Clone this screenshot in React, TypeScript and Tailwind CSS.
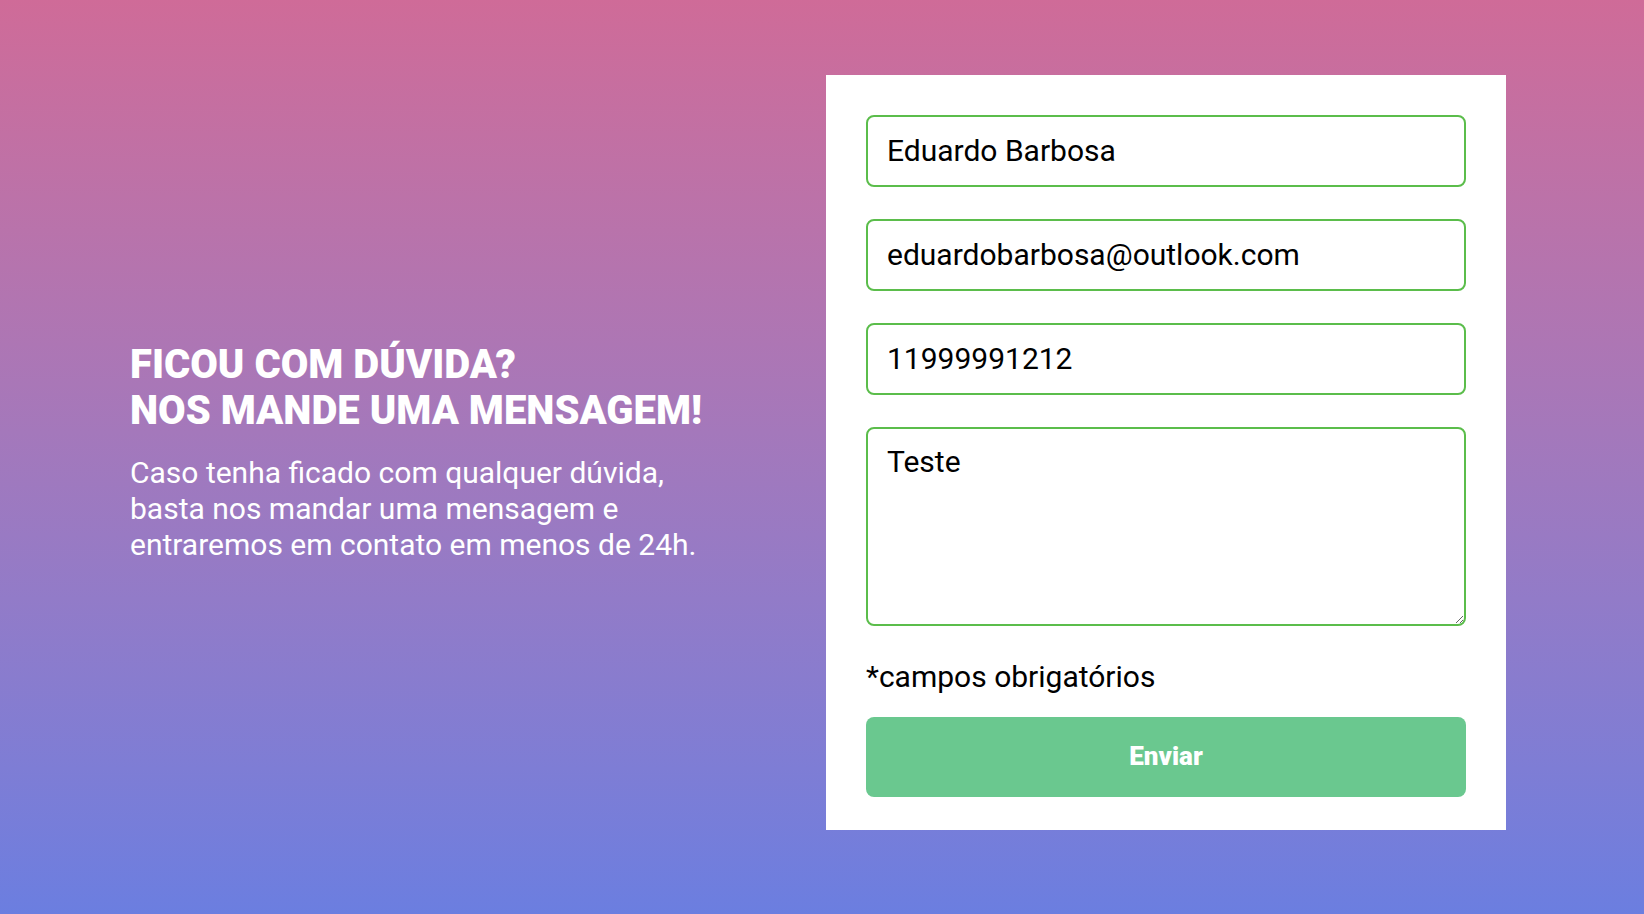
import React from 'react';

const fieldClass =
    'w-full h-[72px] rounded-[8px] border-2 border-[#5bbd4b] bg-white px-[19px] text-[30px] text-black outline-none';

export default function App() {
    return (
        <div className="h-[914px] w-full bg-gradient-to-b from-[#cf6b98] to-[#6b7ee0] font-['Roboto',sans-serif]">
            <div className="flex h-full items-center justify-between pl-[130px] pr-[138px] pb-[10px]">
                {/* texto da esquerda */}
                <div className="w-[592px] text-white">
                    <h2 className="text-[40px] font-black leading-[46px] uppercase">
                        Ficou com dúvida?
                        <br />
                        Nos mande uma mensagem!
                    </h2>
                    <p className="mt-[21px] text-[30px] leading-[36px]">
                        Caso tenha ficado com qualquer dúvida, basta nos mandar uma mensagem e entraremos em contato em menos de 24h.
                    </p>
                </div>

                {/* formulário */}
                <form className="w-[680px] bg-white px-[40px] pt-[40px] pb-[33px]" onSubmit={e => e.preventDefault()}>
                    <input type="text" defaultValue="Eduardo Barbosa" className={fieldClass} />
                    <input type="email" defaultValue="eduardobarbosa@outlook.com" className={`${fieldClass} mt-[32px]`} />
                    <input type="tel" defaultValue="11999991212" className={`${fieldClass} mt-[32px]`} />
                    <textarea
                        defaultValue="Teste"
                        className="mt-[32px] block h-[199px] w-full rounded-[8px] border-2 border-[#5bbd4b] bg-white px-[19px] pt-[15px] text-[30px] leading-[36px] text-black outline-none"
                    />
                    <p className="mt-[33px] text-[30px] leading-[36px] text-black">*campos obrigatórios</p>
                    <button
                        type="submit"
                        className="mt-[22px] h-[80px] w-full rounded-[8px] bg-[#6ac88f] text-[26px] font-black text-white"
                    >
                        Enviar
                    </button>
                </form>
            </div>
        </div>
    );
}
